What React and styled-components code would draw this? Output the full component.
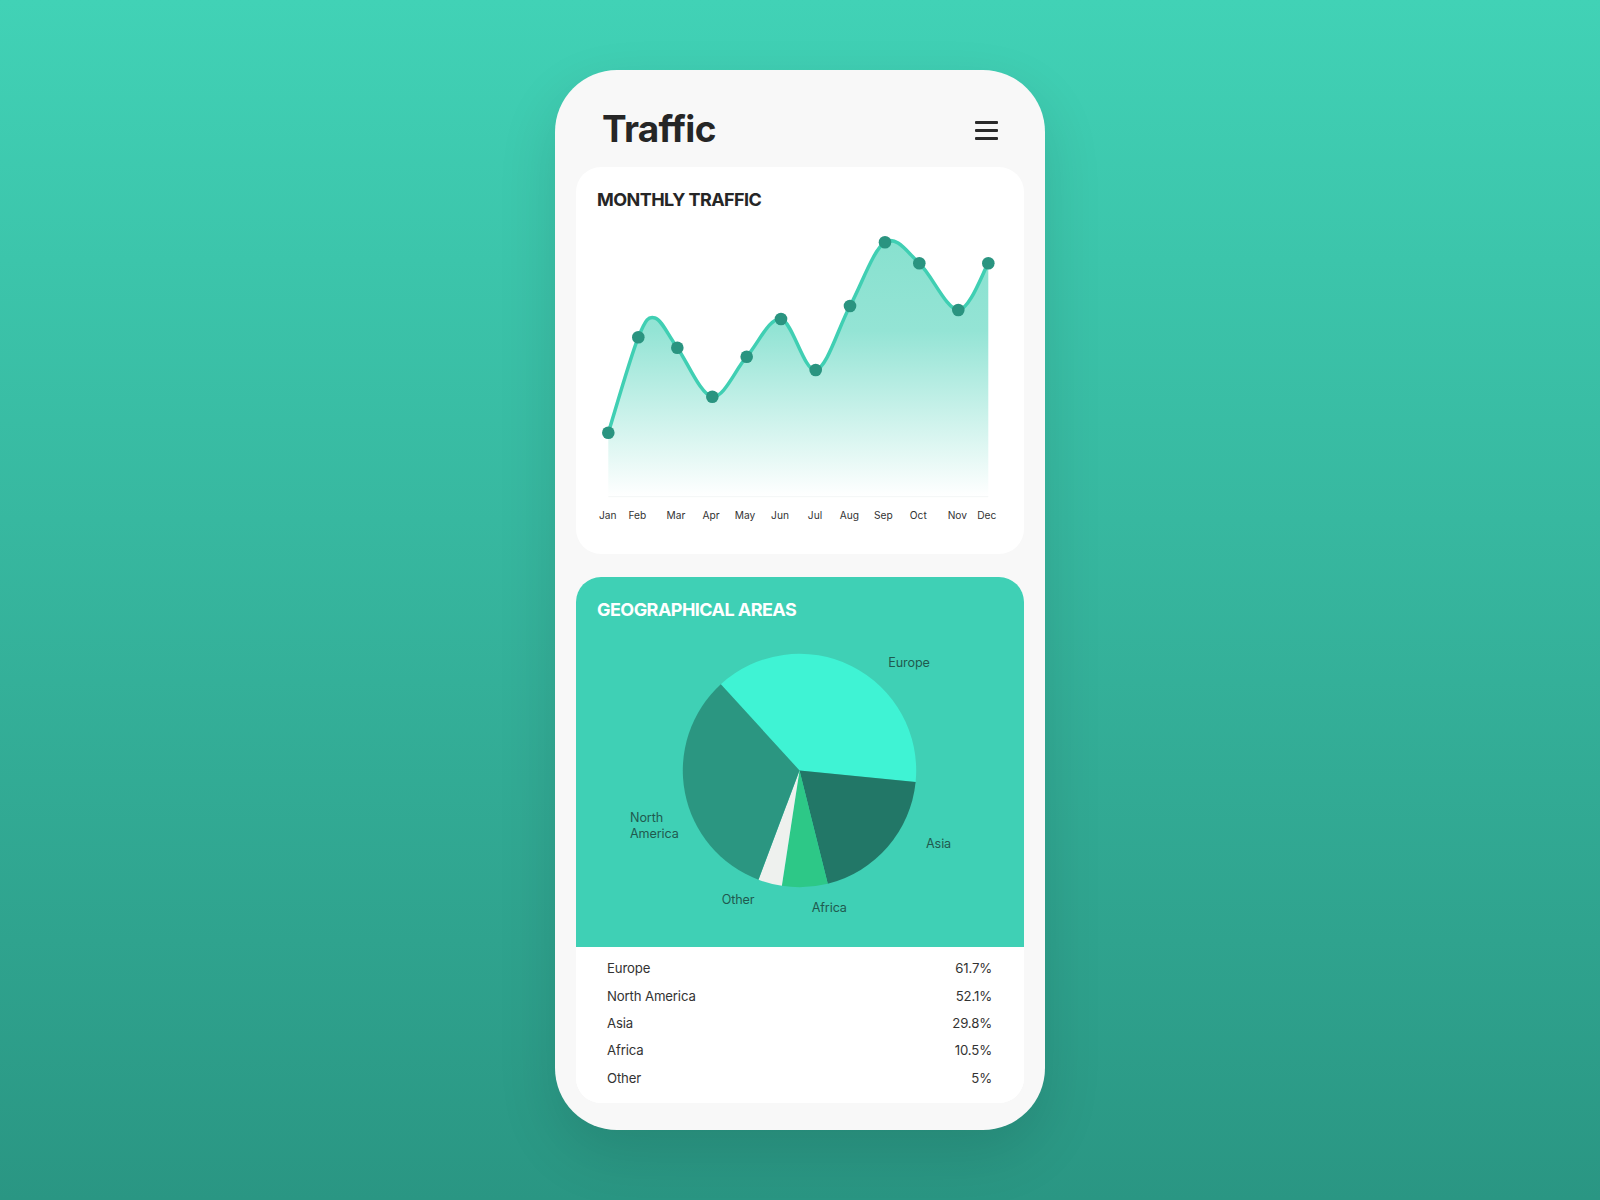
import React from 'react'
import styled, {createGlobalStyle} from 'styled-components'

const GlobalStyles = createGlobalStyle`
  html, body { margin: 0; padding: 0; }
  body {
    font-family: Inter, "Noto Sans", sans-serif;
    background: linear-gradient(180deg, #41d2b6 0%, #2a9683 100%);
    min-height: 100vh;
  }
`

const Page = styled.div`
  height: 1200px;
  display: flex;
  align-items: center;
  justify-content: center;
`

const Phone = styled.div`
  width: 490px;
  box-sizing: border-box;
  padding: 36px 21px 27px;
  background: #f8f8f8;
  border-radius: 62px;
  box-shadow: 0 24px 60px rgba(0, 0, 0, 0.12);
  display: flex;
  flex-direction: column;
`

const Header = styled.header`
  height: 46px;
  padding: 0 26px;
  margin-bottom: 15px;
  display: flex;
  align-items: center;
  justify-content: space-between;
`

const Title = styled.h1`
  margin: 0;
  font-size: 37px;
  line-height: 46px;
  font-weight: 700;
  color: #262626;
  letter-spacing: -0.7px;
`

const MenuButton = styled.button`
  width: 23px;
  height: 19px;
  margin-top: 4px;
  padding: 0;
  border: none;
  background: none;
  display: flex;
  flex-direction: column;
  justify-content: space-between;
  cursor: pointer;
`

const Bar = styled.span`
  display: block;
  height: 2.6px;
  background: #2a2a2a;
  border-radius: 1px;
`

const Card = styled.section`
  background: #ffffff;
  border-radius: 25px;
  overflow: hidden;
  padding-bottom: ${p => p.$pb || 0}px;
`

const TealArea = styled.div`
  background: #3fd0b5;
  padding-top: 21px;
`

const PlainArea = styled.div`
  padding-top: 21px;
`

const CardTitle = styled.h2`
  margin: 0;
  padding: 0 21px;
  font-size: 18px;
  line-height: 24px;
  font-weight: 700;
  letter-spacing: -0.55px;
  color: ${p => (p.$light ? '#ffffff' : '#262626')};
`

const ChartSvg = styled.svg`
  display: block;
  margin-top: 13px;
`

const PieSvg = styled.svg`
  display: block;
`

const Gap = styled.div`
  height: 23px;
`

const List = styled.ul`
  list-style: none;
  margin: 0;
  padding: 8px 32px 12px 31px;
  background: #ffffff;
`

const Row = styled.li`
  height: 27.4px;
  display: flex;
  align-items: center;
  justify-content: space-between;
  font-size: 13.2px;
  letter-spacing: -0.15px;
  color: #333333;
`

const months = ['Jan', 'Feb', 'Mar', 'Apr', 'May', 'Jun', 'Jul', 'Aug', 'Sep', 'Oct', 'Nov', 'Dec']

// curve points in chart coords; the ones marked dot get a marker
const curve = [
  {x: 32.3, y: 207.7, dot: true},
  {x: 62.3, y: 112.3, dot: true},
  {x: 79, y: 93},
  {x: 101.3, y: 122.7, dot: true},
  {x: 136.3, y: 171.7, dot: true},
  {x: 170.7, y: 131.7, dot: true},
  {x: 205, y: 94, dot: true},
  {x: 239.7, y: 145, dot: true},
  {x: 274, y: 81, dot: true},
  {x: 309, y: 17.3, dot: true},
  {x: 343.3, y: 38.3, dot: true},
  {x: 382.3, y: 85, dot: true},
  {x: 412.3, y: 38.3, dot: true},
]

const labelX = [31.7, 61.3, 100, 135, 169, 204, 239, 273.3, 307.3, 342.3, 381.3, 410.7]
const BASE = 271.7

function smoothPath(pts) {
  let d = `M${pts[0].x},${pts[0].y}`
  for (let i = 0; i < pts.length - 1; i++) {
    const p0 = pts[i - 1] || pts[i]
    const p1 = pts[i]
    const p2 = pts[i + 1]
    const p3 = pts[i + 2] || p2
    const c1x = p1.x + (p2.x - p0.x) / 6
    const c1y = p1.y + (p2.y - p0.y) / 6
    const c2x = p2.x - (p3.x - p1.x) / 6
    const c2y = p2.y - (p3.y - p1.y) / 6
    d += ` C${c1x},${c1y} ${c2x},${c2y} ${p2.x},${p2.y}`
  }
  return d
}

function TrafficChart() {
  const line = smoothPath(curve)
  const first = curve[0]
  const last = curve[curve.length - 1]
  const area = `${line} L${last.x},${BASE} L${first.x},${BASE} Z`
  return (
    <ChartSvg width="446" height="315" viewBox="0 0 446 315">
      <defs>
        <linearGradient id="fade" x1="0" y1="17" x2="0" y2={BASE} gradientUnits="userSpaceOnUse">
          <stop offset="0" stopColor="#88e1cf" />
          <stop offset="0.35" stopColor="#94e4d5" />
          <stop offset="1" stopColor="#ffffff" />
        </linearGradient>
      </defs>
      <path d={area} fill="url(#fade)" />
      <line x1={first.x} x2={last.x} y1={BASE} y2={BASE} stroke="#f3f6f5" strokeWidth="1" />
      <path d={line} fill="none" stroke="#40cfb3" strokeWidth="3.5" strokeLinecap="round" />
      {curve.filter(p => p.dot).map((p, i) => (
        <circle key={i} cx={p.x} cy={p.y} r="6.3" fill="#2a9480" />
      ))}
      {months.map((m, i) => (
        <text key={m} x={labelX[i]} y="293.5" textAnchor="middle" fontSize="10.2" fill="#333" fontFamily="Inter, sans-serif">
          {m}
        </text>
      ))}
    </ChartSvg>
  )
}

const slices = [
  {name: 'Europe', from: 227.6, to: 365.7, color: '#3ff3d4'},
  {name: 'Asia', from: 365.7, to: 436, color: '#227767'},
  {name: 'Africa', from: 76, to: 98.7, color: '#2dc887'},
  {name: 'Other', from: 98.7, to: 110.6, color: '#eef1ee'},
  {name: 'North America', from: 110.6, to: 227.6, color: '#2b9681'},
]

const CX = 223.5
const CY = 148.5
const R = 116.7

function arc(from, to) {
  const a = (from * Math.PI) / 180
  const b = (to * Math.PI) / 180
  const x1 = CX + R * Math.cos(a)
  const y1 = CY + R * Math.sin(a)
  const x2 = CX + R * Math.cos(b)
  const y2 = CY + R * Math.sin(b)
  const large = to - from > 180 ? 1 : 0
  return `M${CX},${CY} L${x1},${y1} A${R},${R} 0 ${large} 1 ${x2},${y2} Z`
}

const pieLabels = [
  {lines: ['Europe'], x: 312.3, y: 44.5},
  {lines: ['North', 'America'], x: 54, y: 199.5},
  {lines: ['Asia'], x: 350, y: 225.5},
  {lines: ['Other'], x: 145.7, y: 281.8},
  {lines: ['Africa'], x: 235.7, y: 289.5},
]

function GeoPie() {
  return (
    <PieSvg width="446" height="325" viewBox="0 0 446 325">
      {slices.map(s => (
        <path key={s.name} d={arc(s.from, s.to)} fill={s.color} />
      ))}
      {pieLabels.map(l => (
        <text key={l.lines[0]} x={l.x} y={l.y} fontSize="12.6" letterSpacing="-0.1" fill="#1f5a4f" fontFamily="Inter, sans-serif">
          {l.lines.map((t, i) => (
            <tspan key={t} x={l.x} dy={i === 0 ? 0 : 16.6}>{t}</tspan>
          ))}
        </text>
      ))}
    </PieSvg>
  )
}

const areas = [
  ['Europe', '61.7%'],
  ['North America', '52.1%'],
  ['Asia', '29.8%'],
  ['Africa', '10.5%'],
  ['Other', '5%'],
]

export default function App() {
  return (
    <>
      <GlobalStyles />
      <Page>
        <Phone>
          <Header>
            <Title>Traffic</Title>
            <MenuButton aria-label="menu">
              <Bar />
              <Bar />
              <Bar />
            </MenuButton>
          </Header>

          <Card $pb={14}>
            <PlainArea>
              <CardTitle>MONTHLY TRAFFIC</CardTitle>
              <TrafficChart />
            </PlainArea>
          </Card>

          <Gap />

          <Card>
            <TealArea>
              <CardTitle $light>GEOGRAPHICAL AREAS</CardTitle>
              <GeoPie />
            </TealArea>
            <List>
              {areas.map(([name, value]) => (
                <Row key={name}>
                  <span>{name}</span>
                  <span>{value}</span>
                </Row>
              ))}
            </List>
          </Card>
        </Phone>
      </Page>
    </>
  )
}
